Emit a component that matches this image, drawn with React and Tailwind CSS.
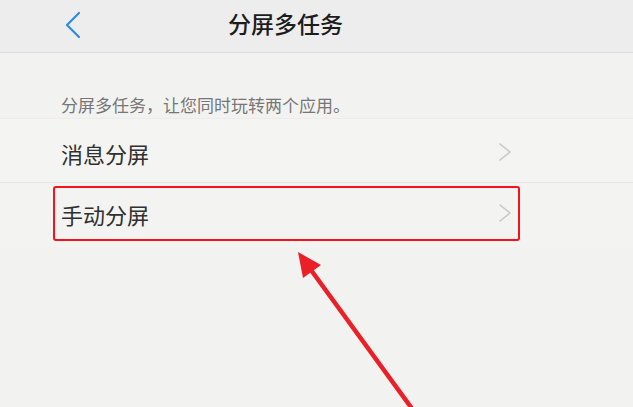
import React from "react";

const font = { fontFamily: '"Noto Sans CJK SC", "Noto Sans", sans-serif' };

function Chevron() {
  return (
    <svg width="14" height="18" viewBox="0 0 14 18" className="shrink-0">
      <path d="M2 1 L12 9 L2 17" fill="none" stroke="#c6c7c6" strokeWidth="1.6" strokeLinecap="round" strokeLinejoin="round" />
    </svg>
  );
}

export default function App() {
  return (
    <div className="relative w-[633px] h-[407px] overflow-hidden bg-[#f2f3f1]" style={font}>
      {/* header */}
      <div className="flex items-center h-[53px] bg-[#ededed] border-b border-[#dcdcdc] pl-[64px]">
        <svg width="18" height="28" viewBox="0 0 18 28" className="shrink-0 -mt-[2px]">
          <path d="M15 2 L3 14 L15 26" fill="none" stroke="#2d8de3" strokeWidth="2.2" strokeLinecap="round" strokeLinejoin="round" />
        </svg>
        <div className="ml-[146px] text-[23px] leading-[28px] font-medium text-[#1c1c1c] -mt-[7px]">分屏多任务</div>
      </div>

      {/* description */}
      <div className="pl-[61px] pt-[40px]">
        <div className="text-[17px] leading-[24px] text-[#767676]">分屏多任务，让您同时玩转两个应用。</div>
      </div>

      {/* rows */}
      <div className="mt-[1px] border-t border-[#ececea]">
        <div className="flex items-center justify-between h-[64px] pl-[61px] pr-[121px] border-b border-[#e3e3e1] bg-[#f4f5f3]">
          <span className="text-[22px] leading-[28px] text-[#303030] pt-[5px]">消息分屏</span>
          <span className="pt-[3px]"><Chevron /></span>
        </div>
        <div className="relative flex items-center justify-between h-[64px] pl-[61px] pr-[121px] bg-[#f3f4f2]">
          <span className="text-[22px] leading-[28px] text-[#303030] -mt-[3px]">手动分屏</span>
          <span className="-mt-[5px]"><Chevron /></span>
          <div className="absolute left-[53px] top-[3px] w-[467px] h-[55px] border-[2.5px] border-[#f5131b] rounded-[3px]" />
        </div>
      </div>

      {/* arrow annotation */}
      <svg className="absolute left-0 top-0 pointer-events-none" width="633" height="407" viewBox="0 0 633 407">
        <line x1="311" y1="270" x2="413" y2="410" stroke="#eb1f28" strokeWidth="4.5" />
        <polygon points="298,252 321,265 303,278" fill="#eb1f28" />
      </svg>
    </div>
  );
}
